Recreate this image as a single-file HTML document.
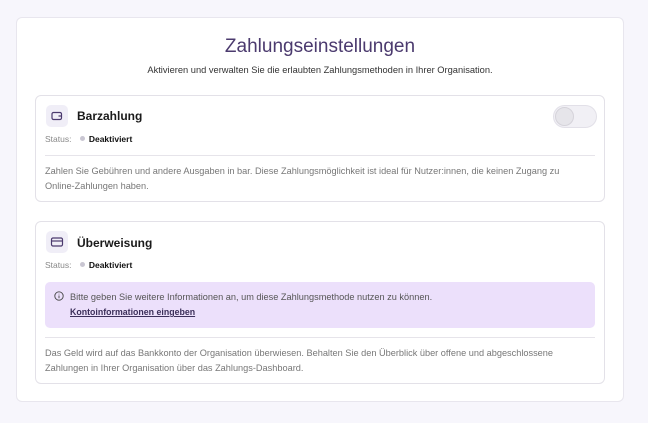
<!DOCTYPE html>
<html><head><style>
*{margin:0;padding:0;box-sizing:border-box}
body{width:648px;height:423px;background:#f7f6fc;font-family:"Liberation Sans",sans-serif;position:relative;overflow:hidden;color:#222}
.outer{position:absolute;left:16px;top:17px;width:608px;height:385px;background:#fff;border:1px solid #e8e6ee;border-radius:6px}
.abs{position:absolute}
h1{position:absolute;left:0;width:640px;top:36px;text-align:center;font-weight:normal;font-size:19px;color:#4b3a6e}
.sub{left:0;width:640px;top:65px;text-align:center;font-size:9.3px;color:#333}
.card{position:absolute;left:35px;width:570px;background:#fff;border:1px solid #e3e1e8;border-radius:6px}
.ico{position:absolute;left:10px;width:22px;height:22px;background:#f0eef7;border-radius:5px}
.t{position:absolute;left:41px;font-size:12px;font-weight:bold;color:#1a1a1a}
.st{position:absolute;left:9px;font-size:8.5px;color:#888}
.st b{color:#111;margin-left:4px}
.dot{display:inline-block;width:5px;height:5px;border-radius:50%;background:#c9c6d2;margin-left:6px;vertical-align:1px}
.hr{position:absolute;left:9px;right:9px;height:1px;background:#e6e4ea}
.d{position:absolute;left:9px;right:9px;font-size:9.2px;line-height:15px;color:#777}
</style></head><body>
<div class="outer"></div>
<h1>Zahlungseinstellungen</h1>
<div class="abs sub">Aktivieren und verwalten Sie die erlaubten Zahlungsmethoden in Ihrer Organisation.</div>

<div class="card" style="top:95px;height:107px">
  <div class="ico" style="top:9px"><svg width="22" height="22" viewBox="0 0 22 22"><rect x="6" y="7.5" width="9.5" height="7" rx="1.5" fill="none" stroke="#4b3a6e" stroke-width="1.2"/><path d="M12.5 11h3" stroke="#4b3a6e" stroke-width="1.2"/></svg></div>
  <div class="t" style="top:13px">Barzahlung</div>
  <div style="position:absolute;left:517px;top:9px;width:44px;height:23px;border-radius:12px;background:#f1f0f5;border:1px solid #e2e0e8"><div style="position:absolute;left:1px;top:1px;width:19px;height:19px;border-radius:50%;background:#e6e5ea;border:1px solid #d5d3da"></div></div>
  <div class="st" style="top:38px">Status: <span class="dot"></span><b>Deaktiviert</b></div>
  <div class="hr" style="top:59px"></div>
  <div class="d" style="top:68px">Zahlen Sie Gebühren und andere Ausgaben in bar. Diese Zahlungsmöglichkeit ist ideal für Nutzer:innen, die keinen Zugang zu<br>Online-Zahlungen haben.</div>
</div>

<div class="card" style="top:221px;height:163px">
  <div class="ico" style="top:9px"><svg width="22" height="22" viewBox="0 0 22 22"><rect x="5.5" y="7" width="11" height="8" rx="1.5" fill="none" stroke="#4b3a6e" stroke-width="1.2"/><path d="M5.5 10h11" stroke="#4b3a6e" stroke-width="1.2"/></svg></div>
  <div class="t" style="top:14px">Überweisung</div>
  <div class="st" style="top:38px">Status: <span class="dot"></span><b>Deaktiviert</b></div>
  <div style="position:absolute;left:9px;right:9px;top:60px;height:46px;background:#ece0fb;border-radius:5px">
    <svg style="position:absolute;left:9px;top:9px" width="10" height="10" viewBox="0 0 10 10"><circle cx="5" cy="5" r="4.2" fill="none" stroke="#444" stroke-width="0.9"/><path d="M5 4.5v2.8M5 2.8v.6" stroke="#444" stroke-width="0.9"/></svg>
    <div style="position:absolute;left:25px;top:10px;font-size:9.2px;color:#555">Bitte geben Sie weitere Informationen an, um diese Zahlungsmethode nutzen zu können.</div>
    <div style="position:absolute;left:25px;top:25px;font-size:8.8px;color:#3c2f5a;font-weight:bold;text-decoration:underline">Kontoinformationen eingeben</div>
  </div>
  <div class="hr" style="top:115px"></div>
  <div class="d" style="top:124px">Das Geld wird auf das Bankkonto der Organisation überwiesen. Behalten Sie den Überblick über offene und abgeschlossene<br>Zahlungen in Ihrer Organisation über das Zahlungs-Dashboard.</div>
</div>
</body></html>
